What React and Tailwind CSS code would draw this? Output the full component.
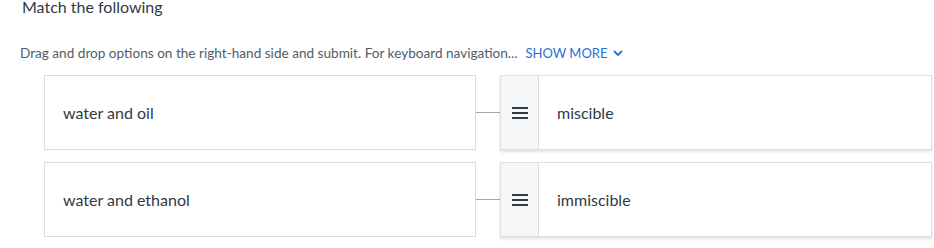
import React from "react";

const PAIRS = [
  { left: "water and oil", right: "miscible" },
  { left: "water and ethanol", right: "immiscible" },
];

function Handle() {
  return (
    <svg width="16" height="12" viewBox="0 0 16 12" className="text-[#333b44]">
      <rect x="0" y="0" width="16" height="2" fill="currentColor" />
      <rect x="0" y="5" width="16" height="2" fill="currentColor" />
      <rect x="0" y="10" width="16" height="2" fill="currentColor" />
    </svg>
  );
}

function MatchRow({ left, right }) {
  return (
    <div className="flex items-center">
      <div className="flex h-[75px] w-[432px] items-center border border-[#d8dbe0] bg-white pl-[18px] text-[16px] text-[#2f3a45]">
        {left}
      </div>
      <div className="h-[1.5px] w-[24px] bg-[#9ba6b0]" />
      <div className="flex h-[75px] w-[432px] border border-[#dcdfe3] bg-white shadow-[0_2px_3px_rgba(0,0,0,0.12)]">
        <div className="flex w-[38px] items-center justify-center border-r border-[#d8dbe0] bg-[#f6f7f8]">
          <Handle />
        </div>
        <div className="flex items-center pl-[18px] text-[16px] text-[#2f3a45]">{right}</div>
      </div>
    </div>
  );
}

export default function App() {
  return (
    <div className="h-[248px] w-[934px] overflow-hidden bg-white font-['Lato','Liberation_Sans',sans-serif]">
      <div className="-mt-[5px] pl-[22px] text-[16px] leading-[24px] text-[#2f3a45]">Match the following</div>
      <div className="mt-[25px] flex items-center pl-[20px] text-[13.6px] leading-[18px] text-[#535c66]">
        <span>Drag and drop options on the right-hand side and submit. For keyboard navigation...</span>
        <button className="ml-[8px] flex items-center gap-[5px] text-[13px] text-[#2a6fd6]">
          SHOW MORE
          <svg width="10" height="7" viewBox="0 0 10 7">
            <path d="M1 1l4 4 4-4" fill="none" stroke="currentColor" strokeWidth="1.8" />
          </svg>
        </button>
      </div>
      <div className="mt-[13px] flex flex-col gap-[12px] pl-[44px]">
        {PAIRS.map((p) => (
          <MatchRow key={p.left} left={p.left} right={p.right} />
        ))}
      </div>
    </div>
  );
}
